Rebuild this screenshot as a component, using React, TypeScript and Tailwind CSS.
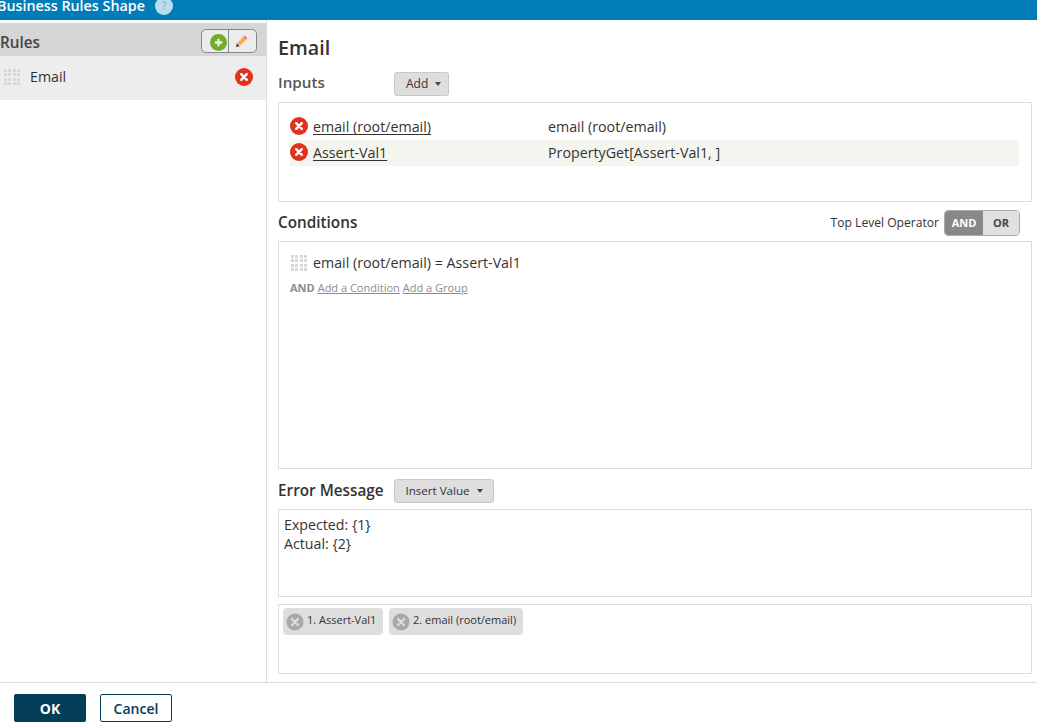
const font = { fontFamily: '"Open Sans", sans-serif' };

function ErrorIcon({ size = 18 }: { size?: number }) {
  return (
    <svg width={size} height={size} viewBox="0 0 18 18" className="shrink-0">
      <circle cx="9" cy="9" r="9" fill="#e0321f" />
      <path d="M6.2 6.2l5.6 5.6M11.8 6.2l-5.6 5.6" stroke="#fff" strokeWidth="2.4" strokeLinecap="round" />
    </svg>
  );
}

function Grip() {
  const pos = [0, 4, 9, 13];
  const dots = [];
  for (const y of pos) for (const x of pos) dots.push(<rect key={`${x}-${y}`} x={x} y={y} width="3" height="3" fill="#d8d8d8" />);
  return <svg width="17" height="17" viewBox="0 0 17 17" className="shrink-0">{dots}</svg>;
}

function Caret() {
  return <svg width="6" height="4" viewBox="0 0 6 4"><path d="M0 0h6L3 4z" fill="#444" /></svg>;
}

function Chip({ label, w }: { label: string; w: string }) {
  return (
    <div className={`flex h-[27px] items-center gap-[3px] rounded-[4px] bg-[#dedede] pl-[3px] pb-[2px] text-[11px] text-[#333] ${w}`}>
      <svg width="18" height="18" viewBox="0 0 18 18" className="mt-[2px] shrink-0">
        <circle cx="9" cy="9" r="8.5" fill="#a9a9a9" />
        <path d="M6 6l6 6M12 6l-6 6" stroke="#dedede" strokeWidth="2.2" strokeLinecap="round" />
      </svg>
      <span>{label}</span>
    </div>
  );
}

export default function App() {
  return (
    <div style={font} className="flex h-[724px] w-[1037px] flex-col overflow-hidden bg-white text-[#333]">
      <header className="flex h-5 shrink-0 items-center gap-[10px] overflow-hidden bg-[#007db8] pb-[8px] text-white">
        <span className="ml-[-3px] text-[14.3px] font-semibold leading-none">Business Rules Shape</span>
        <span className="flex h-[18px] w-[18px] items-center justify-center rounded-full bg-[#b9dcee] text-[12px] font-semibold leading-none text-[#8fc0de]">?</span>
      </header>

      <main className="flex min-h-0 flex-1">
        <aside className="w-[267px] shrink-0 border-r border-[#dddddd] pt-[3px]">
          <div className="flex h-[33px] items-center justify-between bg-[#d6d6d6] pr-[9px] pt-[3px]">
            <span className="mt-[3px] text-[15.3px] font-semibold leading-none text-[#444]">Rules</span>
            <div className="flex h-6 w-[56px] overflow-hidden rounded-[5px] border border-[#888] bg-[#ececec]">
              <div className="flex w-[27px] items-center justify-end border-r border-[#888] pr-px pt-[2px]">
                <svg width="17" height="17" viewBox="0 0 18 18">
                  <circle cx="9" cy="9" r="9" fill="#70ad2f" />
                  <path d="M9 5v8M5 9h8" stroke="#e8f2dc" strokeWidth="2.4" />
                </svg>
              </div>
              <div className="flex flex-1 items-center justify-center">
                <svg width="13" height="13" viewBox="0 0 14 14" className="mr-[2px]">
                  <path d="M1 13l1-4 3 3z" fill="#3a3a3a" />
                  <path d="M2.5 8.5L8.5 2.5l3 3-6 6z" fill="#f4b04a" />
                  <path d="M8.5 2.5l1.3-1.3a1 1 0 0 1 1.4 0l1.6 1.6a1 1 0 0 1 0 1.4l-1.3 1.3z" fill="#ee8080" />
                </svg>
              </div>
            </div>
          </div>
          <div className="flex h-[44px] items-center bg-[#ededed] pb-[2px] pl-1 pr-[13px]">
            <Grip />
            <span className="ml-[9px] flex-1 text-[14.2px] leading-none">Email</span>
            <ErrorIcon />
          </div>
        </aside>

        <section className="flex min-w-0 flex-1 flex-col pl-[11px] pr-[5px]">
          <h1 className="mb-px mt-[14px] h-[27px] text-[19.7px] font-semibold leading-[27px] text-[#333]">Email</h1>

          <div className="mt-[10px] flex h-6 items-center">
            <h2 className="mb-[3px] w-[116px] text-[15.2px] font-semibold leading-none text-[#555]">Inputs</h2>
            <button className="flex h-6 w-[55px] items-center gap-[7px] rounded-[3px] border border-[#c8c8c8] bg-[#dedede] pl-[11px] text-xs text-[#333]">
              Add <Caret />
            </button>
          </div>

          <div className="mt-[6px] h-[100px] border border-[#dddddd] pl-[11px] pr-3 pt-[11px] text-[14.25px] leading-none">
            <div className="flex h-[26px] items-center">
              <div className="mb-[2px]"><ErrorIcon /></div>
              <a className="ml-[5px] w-[235px] underline underline-offset-2">email (root/email)</a>
              <span>email (root/email)</span>
            </div>
            <div className="flex h-[26px] items-center bg-[#f5f5f0]">
              <div className="mb-[2px]"><ErrorIcon /></div>
              <a className="ml-[5px] w-[235px] underline underline-offset-2">Assert-Val1</a>
              <span>PropertyGet[Assert-Val1, ]</span>
            </div>
          </div>

          <div className="mt-2 flex h-[26px] items-center justify-between pr-3">
            <h2 className="text-[15.3px] font-semibold leading-none text-[#333]">Conditions</h2>
            <div className="flex items-center gap-[5px]">
              <span className="text-[12.1px]">Top Level Operator</span>
              <div className="flex h-[26px] w-[76px] overflow-hidden rounded-[4px] border border-[#aaa] text-[11px] font-bold">
                <div className="flex w-[38px] items-center justify-center bg-[#888888] text-white">AND</div>
                <div className="flex flex-1 items-center justify-center bg-[#e0e0e0] text-[#444]">OR</div>
              </div>
            </div>
          </div>

          <div className="mt-[5px] h-[228px] border border-[#dddddd] pl-[12px] pt-[11px]">
            <div className="flex h-[20px] items-center gap-[5px] text-[14.25px] leading-none">
              <Grip />
              <span>email (root/email) = Assert-Val1</span>
            </div>
            <div className="ml-[-1px] mt-[8px] flex gap-[3px] text-[11px] leading-[14px] text-[#8c8c8c]">
              <b>AND</b>
              <a className="underline">Add a Condition</a>
              <a className="underline">Add a Group</a>
            </div>
          </div>

          <div className="mt-[10px] flex h-6 items-center">
            <h2 className="w-[116px] text-[15.3px] font-semibold leading-none text-[#333]">Error Message</h2>
            <button className="flex h-6 w-[100px] items-center justify-center gap-[7px] rounded-[3px] border border-[#c8c8c8] bg-[#dedede] text-[11.6px] text-[#333]">
              Insert Value <Caret />
            </button>
          </div>

          <div className="mt-[6px] h-[88px] border border-[#dddddd] px-[5px] pt-[5px] text-[14.2px] leading-[19px]">
            <div>Expected: {"{1}"}</div>
            <div>Actual: {"{2}"}</div>
          </div>

          <div className="mt-[7px] flex h-[70px] items-start gap-[6px] border border-[#dddddd] px-1 pt-[3px]">
            <Chip label="1. Assert-Val1" w="w-[100px]" />
            <Chip label="2. email (root/email)" w="w-[134px]" />
          </div>
        </section>
      </main>

      <footer className="flex h-[42px] shrink-0 items-start gap-[14px] border-t border-[#dddddd] pl-[14px] pt-[11px]">
        <button className="h-7 w-[72px] rounded-[2px] bg-[#033d58] text-[14px] font-bold text-white">OK</button>
        <button className="h-7 w-[72px] rounded-[2px] border border-[#033d58] bg-white text-[14px] font-semibold text-[#033d58]">Cancel</button>
      </footer>
    </div>
  );
}
